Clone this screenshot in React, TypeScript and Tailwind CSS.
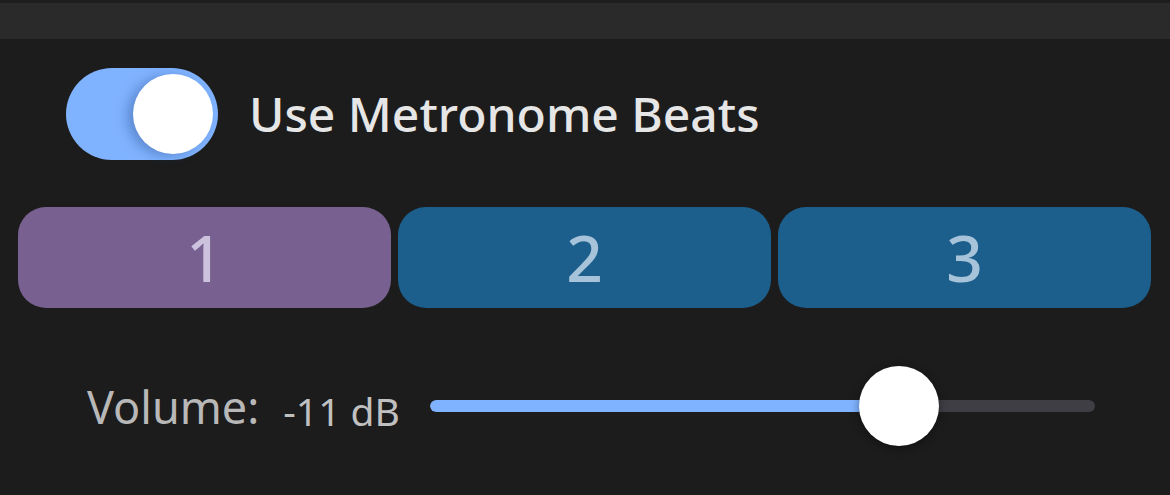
import React, { useState } from 'react';

const beats = [
  { label: '1', bg: 'bg-[#786190]', text: 'text-[#cdc2de]' },
  { label: '2', bg: 'bg-[#1c5f8c]', text: 'text-[#a6c3da]' },
  { label: '3', bg: 'bg-[#1c5f8c]', text: 'text-[#a6c3da]' },
];

export default function App() {
  const [enabled, setEnabled] = useState(true);
  const [volume] = useState(0.705);

  return (
    <div
      className="w-[1170px] h-[495px] bg-[#1c1c1c] overflow-hidden flex flex-col"
      style={{ fontFamily: '"Noto Sans", "Open Sans", sans-serif' }}
    >
      <div className="h-[3px] bg-[#1e1e1e]" />
      <div className="h-[36px] bg-[#2a2a2a]" />

      {/* toggle row */}
      <div className="flex items-center pl-[66px] pt-[29px]">
        <button
          onClick={() => setEnabled(!enabled)}
          className="relative w-[152px] h-[92px] rounded-full bg-[#80b3ff]"
        >
          <span className="absolute right-[5px] top-[6px] w-[80px] h-[80px] rounded-full bg-white shadow-[-6px_2px_12px_rgba(30,60,120,0.35)]" />
        </button>
        <span className="ml-[31px] text-[48px] font-medium text-[#e6e6e6] leading-none">
          Use Metronome Beats
        </span>
      </div>

      {/* beats */}
      <div className="flex gap-[7px] px-[18px] pr-[19px] mt-[47px]">
        {beats.map((b) => (
          <div
            key={b.label}
            className={`flex-1 h-[101px] rounded-[28px] flex items-center justify-center ${b.bg}`}
          >
            <span className={`text-[64px] font-medium leading-none ${b.text}`}>{b.label}</span>
          </div>
        ))}
      </div>

      {/* volume */}
      <div className="flex items-center pl-[87px] mt-[58px]">
        <span className="text-[45px] text-[#b8b8b8] leading-none">Volume:</span>
        <span className="ml-[24px] text-[39px] text-[#c0c0c0] leading-none mt-[8px]">-11 dB</span>
        <div className="relative ml-[30px] w-[665px] h-[80px] flex items-center">
          <div className="w-full h-[12px] rounded-full bg-[#3f3e45] overflow-hidden">
            <div className="h-full bg-[#80b3ff] rounded-full" style={{ width: `${volume * 100}%` }} />
          </div>
          <div
            className="absolute top-0 w-[80px] h-[80px] rounded-full bg-white shadow-[0_2px_10px_rgba(0,0,0,0.4)]"
            style={{ left: `calc(${volume * 100}% - 40px)` }}
          />
        </div>
      </div>
    </div>
  );
}
